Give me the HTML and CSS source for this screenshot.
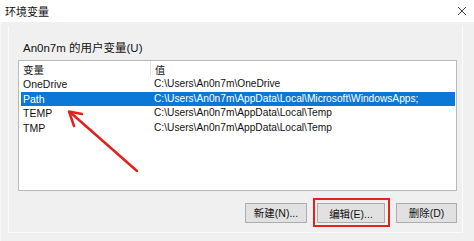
FILE: index.html
```html
<!DOCTYPE html>
<html lang="zh-CN">
<head>
    <meta charset="UTF-8">
    <title>环境变量</title>
    <link rel="stylesheet" href="styles.css">
</head>
<body>
    <div class="window">
        <div class="titlebar">
            <span class="title">环境变量</span>
            <svg class="close" width="10" height="10" viewBox="0 0 10 10">
                <path d="M1 1L9 9M9 1L1 9" stroke="#444" stroke-width="1" fill="none"/>
            </svg>
        </div>
        <div class="content">
            <div class="group">
                <div class="group-label">An0n7m 的用户变量(U)</div>
                <div class="list">
                    <div class="list-head">
                        <div class="col-name">变量</div>
                        <div class="col-value">值</div>
                    </div>
                    <div class="row">
                        <div class="col-name">OneDrive</div>
                        <div class="col-value">C:\Users\An0n7m\OneDrive</div>
                    </div>
                    <div class="row selected">
                        <div class="col-name">Path</div>
                        <div class="col-value">C:\Users\An0n7m\AppData\Local\Microsoft\WindowsApps;</div>
                    </div>
                    <div class="row">
                        <div class="col-name">TEMP</div>
                        <div class="col-value">C:\Users\An0n7m\AppData\Local\Temp</div>
                    </div>
                    <div class="row">
                        <div class="col-name">TMP</div>
                        <div class="col-value">C:\Users\An0n7m\AppData\Local\Temp</div>
                    </div>
                </div>
                <div class="buttons">
                    <button class="btn btn-new">新建(N)...</button>
                    <span class="mark"><button class="btn btn-edit">编辑(E)...</button></span>
                    <button class="btn btn-del">删除(D)</button>
                </div>
            </div>
        </div>
        <svg class="arrow" width="474" height="241" viewBox="0 0 474 241">
            <line x1="137" y1="171" x2="71" y2="113" stroke="#e3211c" stroke-width="2.5" stroke-linecap="round"/>
            <polyline points="82,114 69,111.5 74,126" fill="none" stroke="#e3211c" stroke-width="2.5" stroke-linecap="round" stroke-linejoin="round"/>
        </svg>
    </div>
</body>
</html>
```

FILE: styles.css
```css
body {
    margin: 0;
    font-family: "Liberation Sans", "Noto Sans CJK SC", sans-serif;
    font-size: 10.5px;
    color: #111;
    background: #f0f0f0;
}

.window {
    position: relative;
    width: 474px;
    height: 241px;
    overflow: hidden;
}

.titlebar {
    height: 22px;
    background: #fff;
    display: flex;
    align-items: center;
    justify-content: space-between;
    padding: 0 6px 0 5px;
}

.title {
    font-family: "Noto Sans CJK SC", sans-serif;
    font-size: 11px;
    color: #111;
}

.close {
    margin-right: 1px;
}

.content {
    padding: 4px 11px 0 2px;
    border-left: 1px solid #fafafa;
    height: 215px;
}

.group {
    height: 206px;
    margin-left: 5px;
    border-left: 1px solid #fbfbfb;
    border-bottom: 1px solid #fbfbfb;
    border-right: 1px solid #fbfbfb;
    padding: 0 5px 0 9px;
    display: flex;
    flex-direction: column;
}

.group > * {
    flex-shrink: 0;
}

.group-label {
    font-size: 11.5px;
    margin-top: 12px;
    height: 20px;
    line-height: 20px;
    padding-left: 5px;
}

.list {
    margin-top: 2px;
    height: 129px;
    background: #fff;
    border: 1px solid #b9b9b9;
    padding: 0 1px 0 2px;
}

.list-head {
    display: flex;
    height: 16px;
    line-height: 19px;
}

.list-head .col-name {
    border-right: 1px solid #e5e5e5;
}

.row {
    display: flex;
    height: 14.5px;
    line-height: 14.5px;
}

.col-name {
    width: 127px;
    padding-left: 2px;
    flex-shrink: 0;
}

.col-value {
    padding-left: 4px;
    white-space: nowrap;
    font-size: 10.2px;
}

.row.selected {
    background: #0b78d7;
    color: #fff;
}

.buttons {
    display: flex;
    justify-content: flex-end;
    align-items: center;
    gap: 6px;
    margin-top: 7px;
}

.btn {
    font-family: "Liberation Sans", "Noto Sans CJK SC", sans-serif;
    font-size: 10.5px;
    height: 20px;
    padding: 0;
    background: #e1e1e1;
    border: 1px solid #adadad;
    color: #111;
}

.btn-new {
    width: 62px;
}

.btn-edit {
    width: 68px;
}

.btn-del {
    width: 61px;
}

.mark {
    display: flex;
    padding: 3px 3px 2px 2px;
    border: 2px solid #e0231c;
}

.arrow {
    position: absolute;
    left: 0;
    top: 0;
    pointer-events: none;
}
```
